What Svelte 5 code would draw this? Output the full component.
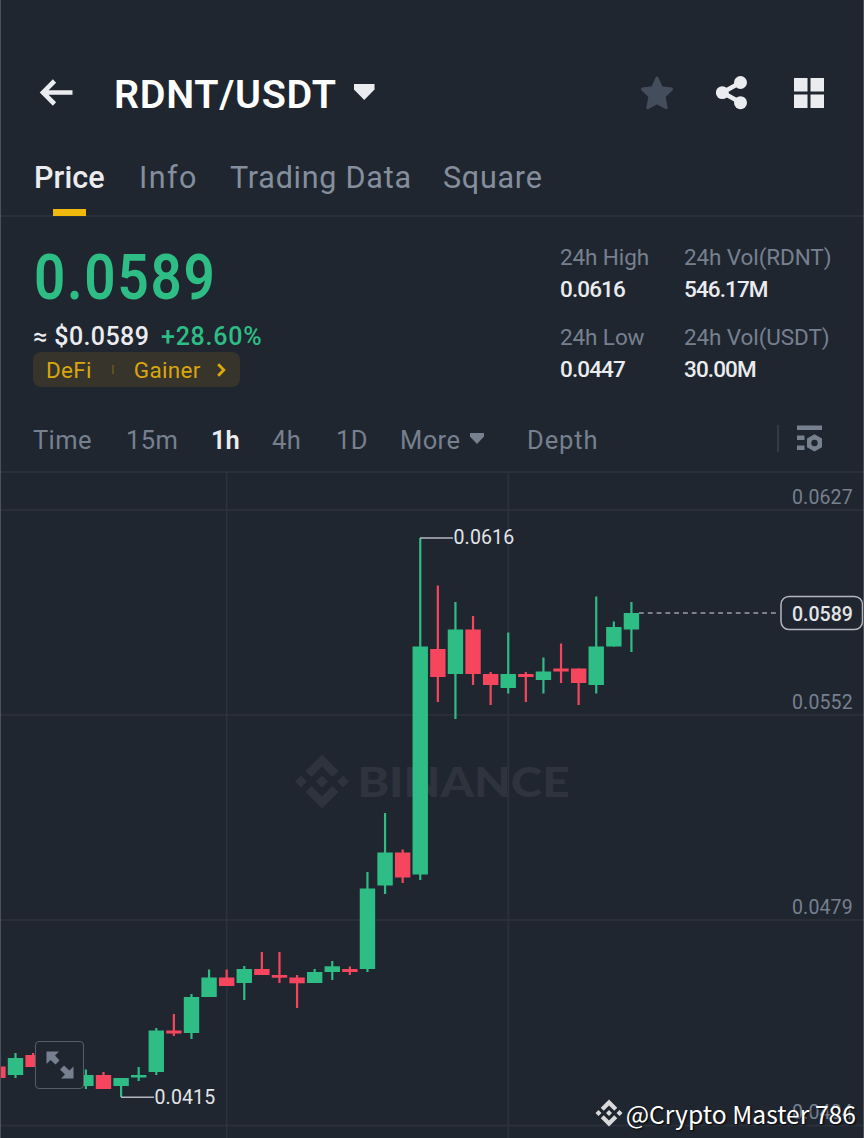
<script>
	const tabs = ['Price', 'Info', 'Trading Data', 'Square'];
	const intervals = ['Time', '15m', '1h', '4h', '1D', 'More', 'Depth'];
	const stats = [
		{ label: '24h High', value: '0.0616' },
		{ label: '24h Vol(RDNT)', value: '546.17M' },
		{ label: '24h Low', value: '0.0447' },
		{ label: '24h Vol(USDT)', value: '30.00M' }
	];

	let activeTab = $state('Price');
	let activeInterval = $state('1h');

	const scale = [
		{ label: '0.0627', y: 510 },
		{ label: '0.0552', y: 715 },
		{ label: '0.0479', y: 920 },
		{ label: '0.0404', y: 1125.5 }
	];

	// up/down, then y of high, body top, body bottom, low
	const candles = [
		['down', 1066.5, 1066.5, 1078, 1078],
		['up', 1053, 1058, 1075, 1078],
		['down', 1053, 1055, 1067, 1067],
		['down', 1062, 1067, 1075, 1078],
		['down', 1066, 1072, 1083, 1086],
		['up', 1069.5, 1075, 1086, 1089],
		['down', 1072, 1075, 1089, 1089],
		['up', 1078, 1078, 1086, 1097],
		['up', 1067, 1075, 1077.5, 1081],
		['up', 1028, 1030.5, 1072, 1075],
		['down', 1014, 1030.5, 1033.5, 1036],
		['up', 994, 997, 1033, 1039],
		['up', 969.5, 977.5, 997, 997],
		['down', 969.5, 977.5, 986, 986],
		['up', 966, 969, 983, 1000],
		['down', 952, 969, 975, 975],
		['down', 952, 975, 977.7, 983],
		['down', 975, 977.5, 983.3, 1008],
		['up', 969, 972, 983, 983],
		['up', 961, 966.3, 972, 980],
		['down', 966.5, 969, 972, 975],
		['up', 872, 888.5, 969, 972],
		['up', 813, 852.5, 885.5, 894],
		['down', 849.5, 852.5, 877.5, 883],
		['up', 538, 646.5, 874.5, 880],
		['down', 585.5, 649, 677, 702],
		['up', 602, 629.5, 674, 719],
		['down', 616, 629.5, 674, 685],
		['down', 672, 674, 685, 705],
		['up', 632.5, 674, 688, 693.5],
		['down', 672, 674, 677, 702],
		['up', 657.5, 671.5, 680, 693.5],
		['down', 643.5, 668.5, 671.5, 683],
		['down', 668.5, 668.5, 683, 705],
		['up', 596.5, 646.5, 685, 693.5],
		['up', 621.5, 627, 646.5, 646.5],
		['up', 602, 613, 629.5, 652]
	].map(([dir, high, top, bottom, low], i) => ({ dir, high, top, bottom, low, x: -2.1 + i * 17.598 }));
</script>

{#snippet logo()}
	<path d="M-16.500-10.500 0-27 16.500-10.500 10.500-4.500 0-15-10.500-4.500z M-16.500 10.500-10.500 4.500 0 15 10.500 4.500 16.500 10.500 0 27z M0-6 6 0 0 6-6 0z M-27 0-21-6-15 0-21 6z M27 0 21-6 15 0 21 6z" />
{/snippet}

<div class="screen">
	<header>
		<button class="back" aria-label="Back">
			<svg width="34" height="28" viewBox="0 0 34 28" fill="none" stroke="#eaecef" stroke-width="4.6">
				<path d="M33.500 13.500H4M15.500 2 4 13.500 15.500 25" />
			</svg>
		</button>
		<h1>RDNT/USDT</h1>
		<svg class="caret" width="21" height="16" viewBox="0 0 21 16"><path d="M0 0h20.500v5.500L10.250 16 0 5.500z" fill="#eaecef" /></svg>
		<div class="actions">
			<svg width="34" height="35" viewBox="0 0 34 35" fill="#444d5b" stroke="#444d5b" stroke-width="3" stroke-linejoin="round">
				<path d="M17 2l4.300 9.700 10.200 1.400-7.500 7.300 2.200 11.300L17 26.800l-9.200 4.900 2.200-11.300L2.500 13.100l10.200-1.400z" />
			</svg>
			<svg width="32" height="34" viewBox="0 0 32 34" fill="#eaecef">
				<path d="M24.500 6.500 6.500 16.500 24.500 26.500" fill="none" stroke="#eaecef" stroke-width="4.400" />
				<circle cx="24.500" cy="6.500" r="6.500" /><circle cx="6.300" cy="16.600" r="6.400" /><circle cx="24.500" cy="26.700" r="6.500" />
			</svg>
			<svg width="30" height="30" viewBox="0 0 30 30" fill="#eaecef">
				<path d="M0 0h13.500v13.500H0zM16.500 0H30v13.500H16.500zM0 16.500h13.500V30H0zM16.500 16.500H30V30H16.500z" />
			</svg>
		</div>
	</header>

	<nav class="tabs">
		{#each tabs as tab}
			<button class="tab" class:active={tab === activeTab} onclick={() => (activeTab = tab)}><span>{tab}</span></button>
		{/each}
	</nav>

	<section class="summary">
		<div class="quote">
			<div class="price">0.0589</div>
			<div class="change"><span class="fiat">≈ $0.0589</span><span class="percent">+28.60%</span></div>
			<div class="tags">
				<span class="tag">DeFi</span>
				<i></i>
				<span class="tag gainer">Gainer</span>
				<svg width="9" height="14" viewBox="0 0 9 14" fill="none" stroke="#e0a80b" stroke-width="2.800"><path d="M1.200 1.300 6.800 7l-5.600 5.700" /></svg>
			</div>
		</div>
		<dl class="stats">
			{#each stats as s}
				<div>
					<dt>{s.label}</dt>
					<dd>{s.value}</dd>
				</div>
			{/each}
		</dl>
	</section>

	<div class="intervals">
		{#each intervals as item}
			<button class:active={item === activeInterval} onclick={() => (activeInterval = item)}>
				{item}{#if item === 'More'}<svg width="14" height="11" viewBox="0 0 14 11"><path d="M0 0h14v3.500L7 11 0 3.500z" fill="#76808f" /></svg>{/if}
			</button>
		{/each}
		<div class="settings">
			<svg width="27" height="27" viewBox="0 0 27 27" fill="#76808f">
				<path d="M1 .5h25v4.500H1zM1 10.500h7.500v4.500H1zM1 20.500h7.500v4.500H1z" />
				<path fill-rule="evenodd" d="M18.500 9.200l7.500 4.300v8.800l-7.500 4.300-7.500-4.300v-8.800zM18.500 14.800a3.200 3.200 0 1 0 0 6.400 3.200 3.200 0 0 0 0-6.400z" />
			</svg>
		</div>
	</div>

	<div class="chart">
		<svg width="864" height="665" viewBox="0 473 864 665">
			<g class="grid">
				{#each scale as s}
					<path d="M0 {s.y}H864" />
				{/each}
				<path d="M226.700 473V1138M508.300 473V1138" />
			</g>

			<g class="watermark">
				<g transform="translate(322 781.500)">{@render logo()}</g>
				<text x="357.500" y="796.500" textLength="212" lengthAdjust="spacingAndGlyphs">BINANCE</text>
			</g>

			{#each candles as c}
				<g class={c.dir}>
					<rect x={c.x - 1.1} y={c.high} width="2.200" height={c.low - c.high} />
					<rect x={c.x - 7.7} y={c.top} width="15.400" height={c.bottom - c.top} />
				</g>
			{/each}

			<path class="leader" d="M420 538H453M121 1097.300H154" />
			<text class="mark" x="453.500" y="543.500">0.0616</text>
			<text class="mark" x="154.500" y="1103.500">0.0415</text>

			{#each scale as s}
				<text class="scale" x="792" y={s.y - 6.3}>{s.label}</text>
			{/each}

			<path class="last-line" d="M639 613H777" />
			<rect class="last-box" x="781" y="596.500" width="81.500" height="33" rx="8" />
			<text class="last" x="792" y="621">0.0589</text>
		</svg>

		<button class="expand" aria-label="Expand chart">
			<svg width="28" height="28" viewBox="0 0 28 28" fill="#76808f">
				<path d="M.5.500H13L9 4.500l4.500 5-4 4L4.500 9 .5 13zM27.500 27.500H15l4-4-5-5 4-4 5.500 5 4-4z" />
			</svg>
		</button>

		<div class="credit">
			<svg width="28" height="28" viewBox="-28 -28 56 56" fill="#d9d9d9">{@render logo()}</svg>
			<span>@Crypto Master 786</span>
		</div>
	</div>
</div>

<style>
	:global(body) {
		background: #202630;
	}

	.screen {
		box-sizing: border-box;
		position: relative;
		width: 864px;
		height: 1138px;
		overflow: hidden;
		background: #202630;
		color: #eaecef;
		font-family: Roboto, 'Liberation Sans', sans-serif;
	}

	/* thin frame on both sides of the screen */
	.screen::after {
		content: '';
		position: absolute;
		inset: 0;
		border: solid #4c515b;
		border-width: 0 1px;
		pointer-events: none;
	}

	button {
		padding: 0;
		border: 0;
		background: none;
		color: inherit;
		font: inherit;
		letter-spacing: inherit;
	}

	svg {
		display: block;
		flex-shrink: 0;
	}

	header {
		box-sizing: border-box;
		display: flex;
		align-items: center;
		height: 130px;
		padding: 56px 40px 0 39px;
	}

	h1 {
		margin: 3px 0 0 41px;
		width: 240px;
		font-size: 39.5px;
		font-weight: 600;
		line-height: 46px;
		letter-spacing: 0.7px;
		color: #fff;
		white-space: nowrap;
	}

	.caret {
		margin-bottom: 3px;
	}

	.actions {
		display: flex;
		align-items: center;
		margin-left: auto;
	}

	.actions svg + svg {
		margin-left: 42px;
	}

	.actions svg:last-child {
		margin-left: 46px;
	}

	.tabs {
		box-sizing: border-box;
		display: grid;
		grid-template-columns: 104px 92px 212px auto;
		justify-content: start;
		height: 87px;
		padding-left: 34px;
		border-bottom: 2px solid #29303a;
		font-size: 30.5px;
		letter-spacing: 0.75px;
		color: #848e9c;
	}

	.tab {
		display: flex;
		padding-top: 30px;
		line-height: 35px;
		white-space: nowrap;
	}

	.tab:nth-child(2),
	.tab:nth-child(4) {
		padding-left: 1px;
	}

	.tab:nth-child(2) {
		letter-spacing: 1.4px;
	}

	.tab span {
		position: relative;
	}

	.tab.active {
		color: #eaecef;
		font-weight: 500;
		letter-spacing: 0.1px;
	}

	.tab.active span::after {
		content: '';
		position: absolute;
		left: 19px;
		top: 49px;
		width: 33px;
		height: 7px;
		background: #f0b90b;
	}

	.summary {
		display: flex;
		height: 189px;
	}

	.quote {
		width: 527px;
		padding: 24px 0 0 33px;
	}

	.price {
		height: 74px;
		font-size: 63px;
		font-weight: 600;
		line-height: 73px;
		letter-spacing: 2px;
		color: #2ebd85;
		transform: translateX(1px) scaleX(0.87);
		transform-origin: left;
	}

	.change {
		display: flex;
		height: 37px;
		font-size: 25px;
		font-weight: 500;
		line-height: 43px;
		letter-spacing: 0.4px;
		white-space: nowrap;
	}

	.fiat {
		width: 128px;
	}

	.percent {
		color: #2ebd85;
		letter-spacing: 0.75px;
	}

	.tags {
		box-sizing: border-box;
		display: flex;
		align-items: center;
		width: 207px;
		height: 35px;
		padding-left: 13px;
		border-radius: 8px;
		background: #37342c;
		color: #d9a60d;
		font-size: 22.5px;
		letter-spacing: 0.3px;
	}

	.tags i {
		width: 2px;
		height: 9px;
		margin: 0 20px;
		background: #5e4e22;
	}

	.gainer {
		width: 83px;
	}

	.stats {
		display: grid;
		grid-template-columns: 124px auto;
		grid-template-rows: 80px 80px;
		align-content: start;
		margin: 0;
		padding-top: 24px;
		font-size: 22.5px;
		line-height: 32px;
		white-space: nowrap;
	}

	.stats dt {
		color: #76808f;
		letter-spacing: -0.1px;
	}

	.stats dd {
		margin: 0;
		font-weight: 500;
		letter-spacing: -0.9px;
	}

	.intervals {
		box-sizing: border-box;
		display: grid;
		grid-template-columns: 93px 85px 61px 64px 64px 127px 250px auto;
		justify-content: start;
		align-items: center;
		height: 67px;
		padding-left: 33px;
		border-bottom: 2px solid #29303a;
		font-size: 25.5px;
		letter-spacing: 0.4px;
		color: #76808f;
	}

	.intervals button {
		display: flex;
		align-items: center;
		line-height: 30px;
		padding-top: 3px;
	}

	.intervals button:nth-child(7) {
		letter-spacing: 0.9px;
	}

	.intervals button svg {
		margin: -4px 0 0 10px;
	}

	.intervals .active {
		color: #eaecef;
		font-weight: 600;
		letter-spacing: 0;
	}

	.settings {
		padding-left: 17px;
		border-left: 2px solid #333a46;
	}

	.chart {
		position: relative;
	}

	.grid path {
		stroke: #2c323d;
		stroke-width: 1.6;
	}

	.watermark {
		fill: #2e333e;
	}

	.watermark text {
		font-family: Lato, sans-serif;
		font-size: 42.5px;
		font-weight: 900;
	}

	.up {
		fill: #2ebd85;
	}

	.down {
		fill: #f6465d;
	}

	.leader {
		fill: none;
		stroke: #b4b8be;
		stroke-width: 1.6;
	}

	.mark,
	.scale,
	.last {
		font-size: 19.5px;
		letter-spacing: 0.15px;
	}

	.mark {
		fill: #e3e5e8;
	}

	.scale {
		fill: #76808f;
	}

	.last-line {
		stroke: #9a9ea5;
		stroke-width: 1.7;
		stroke-dasharray: 4.8 4;
	}

	.last-box {
		fill: #202630;
		stroke: #b4b8be;
		stroke-width: 1.5;
	}

	.last {
		fill: #e3e5e8;
		font-weight: 500;
		letter-spacing: 0;
	}

	.expand {
		position: absolute;
		left: 35px;
		top: 568px;
		display: grid;
		place-items: center;
		box-sizing: border-box;
		width: 49px;
		height: 48px;
		border: 1.5px solid #565d69;
		border-radius: 4px;
		background: #202630;
	}

	.credit {
		position: absolute;
		right: 8px;
		bottom: 7px;
		display: flex;
		align-items: center;
		gap: 3px;
		font-family: 'Noto Sans CJK SC', 'Noto Sans', sans-serif;
		font-size: 24.7px;
		line-height: 36px;
		color: #fff;
		text-shadow: 1px 1px 2px #000;
		white-space: nowrap;
	}
</style>
